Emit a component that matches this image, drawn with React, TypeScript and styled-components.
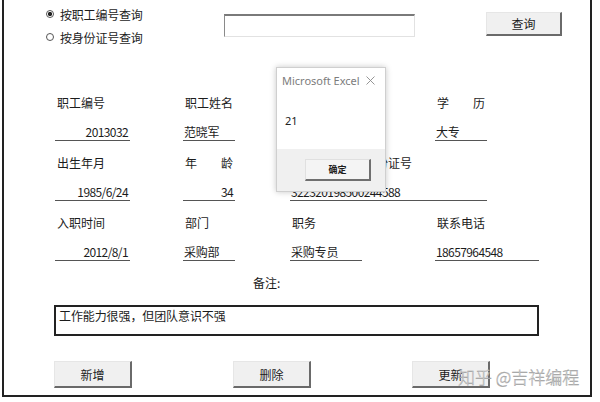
import styled, {createGlobalStyle} from "styled-components";

const GlobalStyle = createGlobalStyle`
  body {
    margin: 0;
    background: #fff;
    font-family: "Noto Sans CJK SC", "Noto Sans", sans-serif;
    color: #1c1c1c;
  }
`

const Page = styled.div`
  position: relative;
  width: 600px;
  height: 402px;
  overflow: hidden;
  background: #fff;
`

const Frame = styled.div`
  box-sizing: border-box;
  margin-left: 2px;
  width: 590px;
  height: 397px;
  border-left: 2px solid #222;
  border-right: 2px solid #222;
  border-bottom: 2px solid #222;
  display: flex;
  flex-direction: column;
`

const TopBar = styled.div`
  display: flex;
  flex-direction: row;
  align-items: flex-start;
  height: 48px;
  padding-left: 42px;
`

const RadioGroup = styled.div`
  width: 178px;
  padding-top: 4px;
  display: flex;
  flex-direction: column;
  gap: 3px;
`

const RadioRow = styled.div`
  display: flex;
  align-items: center;
  height: 20px;
  font-size: 12px;
  letter-spacing: -0.2px;
`

const RadioDot = styled.span<{ checked?: boolean }>`
  box-sizing: border-box;
  width: 8px;
  height: 8px;
  margin-right: 6px;
  border-radius: 50%;
  border: 1px solid #555;
  background: ${p => p.checked ? "radial-gradient(circle, #222 0 45%, #fff 55%)" : "#fff"};
`

const SearchInput = styled.div`
  box-sizing: border-box;
  margin-top: 14px;
  width: 191px;
  height: 23px;
  border-top: 2px solid #7a7a7a;
  border-left: 1px solid #8a8a8a;
  border-right: 1px solid #e2e2e2;
  border-bottom: 1px solid #e2e2e2;
  background: #fff;
`

const Button = styled.div<{ top?: number; width?: number }>`
  box-sizing: border-box;
  margin-top: ${p => p.top ?? 0}px;
  width: ${p => p.width ?? 78}px;
  height: ${p => p.top !== undefined ? 24 : 27}px;
  display: flex;
  align-items: center;
  justify-content: center;
  font-size: 12px;
  background: #f0f0f0;
  border-top: 1px solid #e6e6e6;
  border-left: 1px solid #e6e6e6;
  border-right: 2px solid #6a6a6a;
  border-bottom: 2px solid #6a6a6a;
`

const FieldGrid = styled.div`
  padding-top: 45px;
  padding-left: 51px;
  display: grid;
  grid-template-columns: 128px 107px 145px 150px;
  row-gap: 12px;
`

const Field = styled.div<{ span?: number }>`
  grid-column: span ${p => p.span ?? 1};
  display: flex;
  flex-direction: column;
`

const Label = styled.div<{ indent?: number }>`
  height: 20px;
  line-height: 20px;
  padding-left: ${p => 2 + (p.indent ?? 0)}px;
  font-size: 12px;
  white-space: pre;
`

const Value = styled.div<{ width: number; right?: boolean; digits?: boolean }>`
  box-sizing: border-box;
  margin-top: 11px;
  width: ${p => p.width}px;
  height: 17px;
  line-height: 16px;
  font-size: 12px;
  padding: 0 2px 0 1px;
  text-align: ${p => p.right ? "right" : "left"};
  letter-spacing: ${p => p.right || p.digits ? "-0.6px" : "-0.2px"};
  border-bottom: 1px solid #555;
  white-space: nowrap;
  overflow: hidden;
`

const RemarkLabel = styled.div`
  margin-top: 13px;
  padding-left: 249px;
  height: 18px;
  line-height: 18px;
  font-size: 12px;
`

const RemarkBox = styled.div`
  box-sizing: border-box;
  margin-top: 13px;
  margin-left: 50px;
  width: 485px;
  height: 31px;
  border: 2px solid #222;
  padding: 1px 3px;
  font-size: 12px;
  line-height: 16px;
  letter-spacing: -0.1px;
`

const ButtonRow = styled.div`
  margin-top: 25px;
  padding-left: 50px;
  display: flex;
  gap: 101px;
`

const Dialog = styled.div`
  position: absolute;
  left: 276px;
  top: 67px;
  box-sizing: border-box;
  width: 110px;
  height: 125px;
  background: #fff;
  border: 1px solid #cfcfcf;
  box-shadow: 0 0 6px rgba(0, 0, 0, 0.22);
  display: flex;
  flex-direction: column;
  font-family: "Noto Sans", sans-serif;
`

const DialogTitle = styled.div`
  height: 24px;
  display: flex;
  align-items: center;
  justify-content: space-between;
  padding: 0 10px 0 5px;
  font-size: 11px;
  color: #7c7c7c;
`

const DialogBody = styled.div`
  flex: 1;
  padding: 21px 0 0 8px;
  font-size: 11px;
  color: #222;
`

const DialogFooter = styled.div`
  height: 42px;
  background: #f0f0f0;
  display: flex;
  align-items: center;
  justify-content: flex-end;
  padding-right: 14px;
`

const OkButton = styled.div`
  box-sizing: border-box;
  width: 66px;
  height: 22px;
  display: flex;
  align-items: center;
  justify-content: center;
  font-family: "Noto Sans CJK SC", sans-serif;
  font-size: 9px;
  font-weight: 700;
  background: #f4f4f4;
  border-top: 1px solid #e0e0e0;
  border-left: 1px solid #e0e0e0;
  border-right: 2px solid #6f6f6f;
  border-bottom: 2px solid #6f6f6f;
`

const Watermark = styled.div`
  position: absolute;
  left: 458px;
  top: 366px;
  font-size: 17px;
  line-height: 22px;
  font-weight: 300;
  color: rgba(255, 255, 255, 0.92);
  -webkit-text-stroke: 0.45px #9a9a9a;
  white-space: pre;
  pointer-events: none;
`

const CloseIcon = () => (
    <svg width="9" height="9" viewBox="0 0 9 9">
        <path d="M0.5 0.5 L8.5 8.5 M8.5 0.5 L0.5 8.5" stroke="#8a8a8a" strokeWidth="0.9" fill="none"/>
    </svg>
)

const App = () => {
    return (
        <>
            <GlobalStyle/>
            <Page>
                <Frame>
                    <TopBar>
                        <RadioGroup>
                            <RadioRow><RadioDot checked/>按职工编号查询</RadioRow>
                            <RadioRow><RadioDot/>按身份证号查询</RadioRow>
                        </RadioGroup>
                        <SearchInput/>
                        <Button top={12} width={76} style={{marginLeft: 71}}>查询</Button>
                    </TopBar>

                    <FieldGrid>
                        <Field>
                            <Label>职工编号</Label>
                            <Value width={75} right>2013032</Value>
                        </Field>
                        <Field>
                            <Label>职工姓名</Label>
                            <Value width={52}>范晓军</Value>
                        </Field>
                        {/* covered by the message box */}
                        <Field/>
                        <Field>
                            <Label>学　　历</Label>
                            <Value width={52}>大专</Value>
                        </Field>

                        <Field>
                            <Label>出生年月</Label>
                            <Value width={75} right>1985/6/24</Value>
                        </Field>
                        <Field>
                            <Label>年　　龄</Label>
                            <Value width={52} right>34</Value>
                        </Field>
                        <Field span={2}>
                            <Label indent={72}>身份证号</Label>
                            <Value width={197} digits>322320198500244588</Value>
                        </Field>

                        <Field>
                            <Label>入职时间</Label>
                            <Value width={75} right>2012/8/1</Value>
                        </Field>
                        <Field>
                            <Label>部门</Label>
                            <Value width={52}>采购部</Value>
                        </Field>
                        <Field>
                            <Label>职务</Label>
                            <Value width={72}>采购专员</Value>
                        </Field>
                        <Field>
                            <Label>联系电话</Label>
                            <Value width={104} digits>18657964548</Value>
                        </Field>
                    </FieldGrid>

                    <RemarkLabel>备注:</RemarkLabel>
                    <RemarkBox>工作能力很强，但团队意识不强</RemarkBox>

                    <ButtonRow>
                        <Button>新增</Button>
                        <Button>删除</Button>
                        <Button>更新</Button>
                    </ButtonRow>
                </Frame>

                <Dialog>
                    <DialogTitle>Microsoft Excel<CloseIcon/></DialogTitle>
                    <DialogBody>21</DialogBody>
                    <DialogFooter>
                        <OkButton>确定</OkButton>
                    </DialogFooter>
                </Dialog>

                <Watermark>知乎 @吉祥编程</Watermark>
            </Page>
        </>
    )
}

export default App
